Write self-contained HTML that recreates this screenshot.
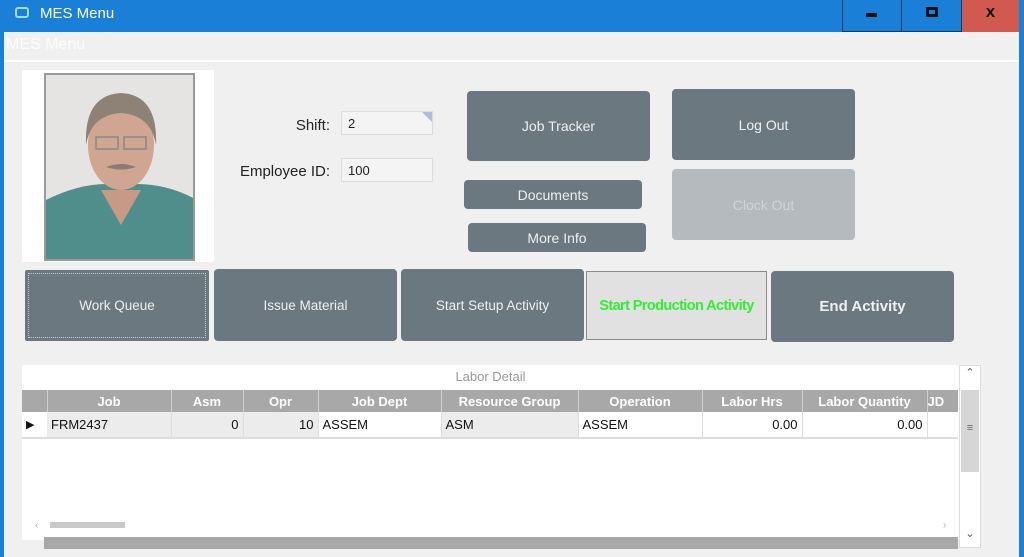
<!DOCTYPE html>
<html><head><meta charset="utf-8"><style>
*{margin:0;padding:0;box-sizing:border-box}
body{width:1024px;height:557px;overflow:hidden;background:#f0f0f0;font-family:"Liberation Sans",Arial,sans-serif;position:relative}
.a{position:absolute}
.btn{position:absolute;background:#6c7880;color:#eef0f2;border-radius:4px;display:flex;align-items:center;justify-content:center;font-size:14px}
.inp{position:absolute;background:#f4f4f4;border:1px solid #dcdcdc;font-size:13px;padding:4px 6px;color:#222}
.lbl{position:absolute;font-size:15px;color:#222;text-align:right}
table{border-collapse:collapse;font-size:13px}
th{background:#a8a8a8;color:#fff;font-weight:bold;height:22px;border-right:1px solid #d0d0d0;text-align:center}
td{height:26px;border-right:1px solid #ddd;border-bottom:2px solid #ddd;padding:0 4px;color:#111}
</style></head><body>
<div class="a" style="left:0;top:0;width:1024px;height:32px;background:#1a7fd6"></div>
<div class="a" style="left:15px;top:7px;width:14px;height:11px;border:2px solid #9fdcff;border-radius:3px"></div>
<div class="a" style="left:40px;top:5px;color:#fff;font-size:15px">MES Menu</div>
<div class="a" style="left:842px;top:0;width:60px;height:32px;border:1px solid #0d3d66;border-top:none;background:#1a7fd6"></div>
<div class="a" style="left:866px;top:13px;width:11px;height:4px;background:#111"></div>
<div class="a" style="left:902px;top:0;width:60px;height:32px;border:1px solid #0d3d66;border-top:none;border-left:none;background:#1a7fd6"></div>
<div class="a" style="left:926px;top:7px;width:12px;height:10px;border:3px solid #111"></div>
<div class="a" style="left:962px;top:0;width:57px;height:32px;background:#d05a4f;color:#111;font-weight:bold;font-size:17px;text-align:center;line-height:24px">x</div>
<div class="a" style="left:0;top:32px;width:4px;height:525px;background:#1a7fd6"></div>
<div class="a" style="left:1019px;top:32px;width:5px;height:525px;background:#1a7fd6"></div>
<div class="a" style="left:6px;top:36px;color:#fcfcfc;font-size:16px">MES Menu</div>
<div class="a" style="left:4px;top:60px;width:1015px;height:2px;background:#fff"></div>

<div class="a" style="left:22px;top:70px;width:192px;height:192px;background:#fff"></div>
<div class="a" style="left:44px;top:73px;width:151px;height:188px;border:2px solid #9a9a9a;background:#e6e4e2;overflow:hidden">
<svg width="151" height="188" viewBox="0 0 151 188">
<path d="M0 188 L0 125 Q40 105 75 110 Q115 105 151 125 L151 188Z" fill="#4f8e8a"/>
<path d="M55 115 L75 150 L95 115Z" fill="#c89a86"/>
<ellipse cx="75" cy="70" rx="33" ry="45" fill="#d0a592"/>
<path d="M40 70 Q38 20 75 18 Q112 20 110 70 Q105 40 75 38 Q45 40 40 70Z" fill="#8d8275"/>
<rect x="50" y="62" width="22" height="12" fill="none" stroke="#888" stroke-width="1.5"/>
<rect x="78" y="62" width="22" height="12" fill="none" stroke="#888" stroke-width="1.5"/>
<path d="M60 92 Q75 86 90 92 Q75 97 60 92Z" fill="#8a7c70"/>
</svg></div>

<div class="lbl" style="left:250px;top:117px;width:80px">Shift:</div>
<div class="inp" style="left:341px;top:111px;width:92px;height:24px">2</div>
<div class="a" style="left:422px;top:112px;width:0;height:0;border-left:10px solid transparent;border-top:10px solid #a8c0dc"></div>
<div class="lbl" style="left:200px;top:163px;width:130px">Employee ID:</div>
<div class="inp" style="left:341px;top:158px;width:92px;height:24px">100</div>

<div class="btn" style="left:467px;top:91px;width:183px;height:70px">Job Tracker</div>
<div class="btn" style="left:464px;top:180px;width:178px;height:29px">Documents</div>
<div class="btn" style="left:468px;top:223px;width:178px;height:29px">More Info</div>
<div class="btn" style="left:672px;top:89px;width:183px;height:71px">Log Out</div>
<div class="btn" style="left:672px;top:169px;width:183px;height:71px;background:#b5babe;color:#d2d4d6">Clock Out</div>

<div class="btn" style="left:25px;top:270px;width:184px;height:71px;border-radius:2px;outline:1px dotted #ccc;outline-offset:-4px;font-size:13.5px">Work Queue</div>
<div class="btn" style="left:214px;top:269px;width:183px;height:72px;font-size:13.5px">Issue Material</div>
<div class="btn" style="left:401px;top:269px;width:183px;height:72px;font-size:13.5px">Start Setup Activity</div>
<div class="btn" style="left:586px;top:271px;width:181px;height:69px;background:#e1e1e1;border:1px solid #8a8a8a;border-radius:0;color:#33ee33;font-weight:bold;letter-spacing:-0.6px;font-size:14.5px">Start Production Activity</div>
<div class="btn" style="left:771px;top:271px;width:183px;height:71px;font-weight:bold;font-size:15px">End Activity</div>

<div class="a" style="left:22px;top:365px;width:937px;height:175px;background:#fff"></div>
<div class="a" style="left:22px;top:369px;width:937px;text-align:center;color:#999;font-size:13px">Labor Detail</div>
<div class="a" style="left:22px;top:390px;width:936px;overflow:hidden">
<table style="width:980px;table-layout:fixed">
<colgroup><col style="width:25px"><col style="width:124px"><col style="width:72px"><col style="width:75px"><col style="width:123px"><col style="width:137px"><col style="width:124px"><col style="width:100px"><col style="width:125px"><col style="width:75px"></colgroup>
<tr><th style="background:#a8a8a8"></th><th>Job</th><th>Asm</th><th>Opr</th><th>Job Dept</th><th>Resource Group</th><th>Operation</th><th>Labor Hrs</th><th>Labor Quantity</th><th style="text-align:left">JD</th></tr>
<tr><td style="background:#fff;font-size:11px;border-right:none">&#9654;</td><td style="background:#ececec">FRM2437</td><td style="background:#ececec;text-align:right">0</td><td style="background:#ececec;text-align:right">10</td><td>ASSEM</td><td style="background:#ececec">ASM</td><td>ASSEM</td><td style="text-align:right">0.00</td><td style="text-align:right">0.00</td><td></td></tr>
</table></div>
<div class="a" style="left:35px;top:520px;color:#aaa;font-size:10px">&#8249;</div>
<div class="a" style="left:50px;top:522px;width:75px;height:6px;background:#c8c8c8"></div>
<div class="a" style="left:943px;top:520px;color:#aaa;font-size:10px">&#8250;</div>
<div class="a" style="left:44px;top:537px;width:914px;height:12px;background:#a8a8a8"></div>
<div class="a" style="left:959px;top:365px;width:22px;height:183px;background:#fff;border:1px solid #ddd"></div>
<div class="a" style="left:959px;top:366px;width:22px;text-align:center;font-size:11px;color:#555">&#8963;</div>
<div class="a" style="left:961px;top:390px;width:18px;height:82px;background:#d6d6d6"></div>
<div class="a" style="left:961px;top:422px;width:18px;text-align:center;font-size:11px;color:#666">&#8801;</div>
<div class="a" style="left:959px;top:527px;width:22px;text-align:center;font-size:11px;color:#555">&#8964;</div>
</body></html>
